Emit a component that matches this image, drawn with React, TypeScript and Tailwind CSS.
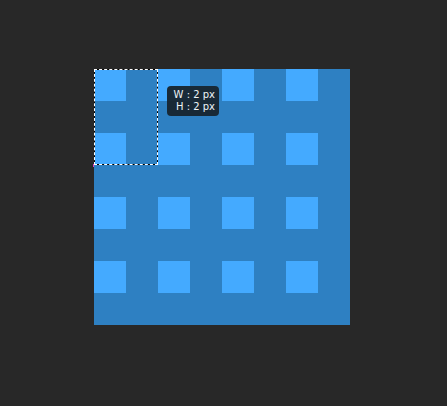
import React from "react";

export default function App() {
  const cells = Array.from({ length: 16 });
  return (
    <div className="w-[447px] h-[406px] bg-[#282828] overflow-hidden">
      <div className="pl-[94px] pt-[69px]">
        <div className="relative w-[256px] h-[256px] bg-[#2e80c2] grid grid-cols-4 grid-rows-4">
          {cells.map((_, i) => (
            <div key={i} className="w-[64px] h-[64px]">
              <div className="w-[32px] h-[32px] bg-[#44aaff]" />
            </div>
          ))}
          <div className="absolute left-0 top-0 w-[64px] h-[96px] border border-black">
            <div className="absolute -inset-[1px] border border-dashed border-white" />
          </div>
          <div className="absolute left-[-1px] top-[95px] w-[1px] h-[3px] bg-[#e040c0]" />
          <div
            className="absolute left-[73px] top-[17px] w-[52px] h-[30px] rounded-[4px] bg-[#17242e]/95 flex flex-col items-end justify-center pr-[4px] text-[#eef3f6] leading-[12px] text-[10px]"
            style={{ fontFamily: '"DejaVu Sans", Verdana, sans-serif' }}
          >
            <div>W : 2 px</div>
            <div>H : 2 px</div>
          </div>
        </div>
      </div>
    </div>
  );
}
